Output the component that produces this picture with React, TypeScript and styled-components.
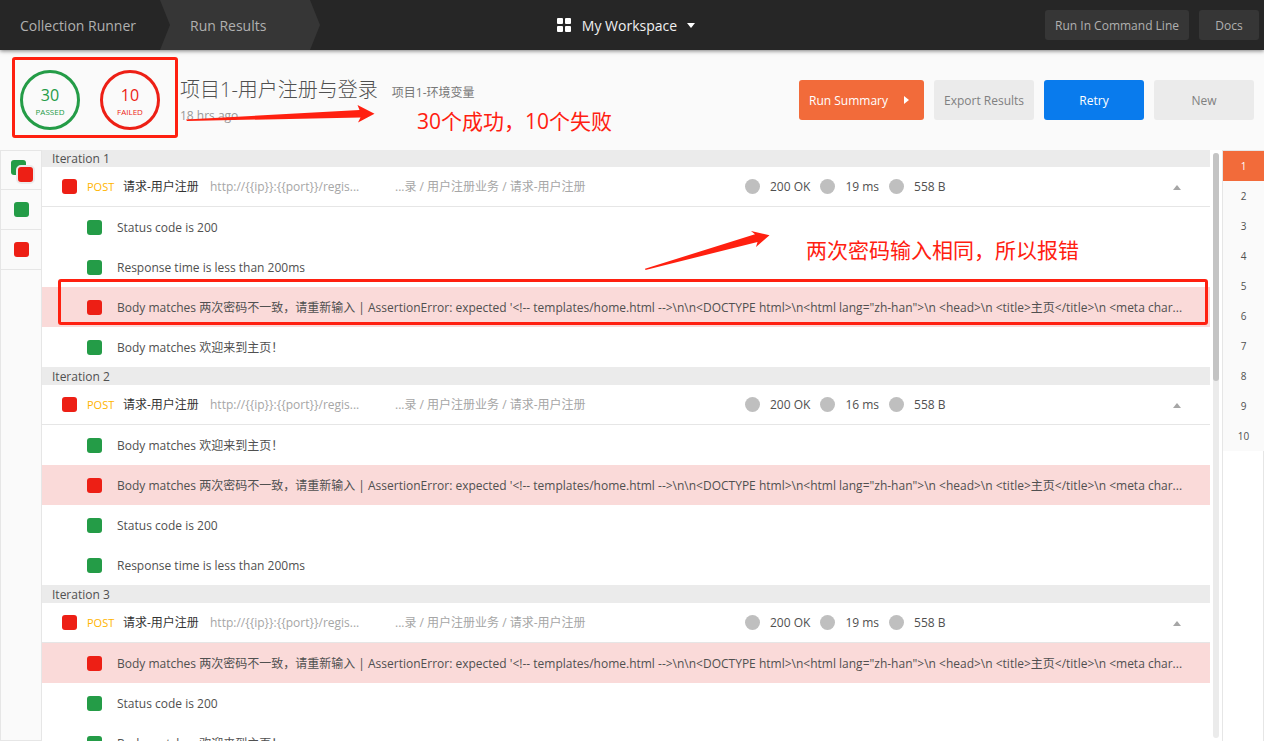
import React from 'react';
import styled, { createGlobalStyle, css } from 'styled-components';

const GREEN = '#249c47';
const RED = '#ed1f15';
const ORANGE = '#f26b3a';
const MARK = '#ff2010';

const GlobalStyle = createGlobalStyle`
  * { box-sizing: border-box; }
  body {
    margin: 0;
    overflow: hidden;
    background: #fff;
    color: #505050;
    font: 12px/18px "Open Sans", "Noto Sans CJK SC", sans-serif;
  }
  button {
    border: 0;
    padding: 0;
    background: none;
    color: inherit;
    font: inherit;
    cursor: pointer;
  }
  svg {
    display: block;
    flex: none;
  }
`;

const Page = styled.div`
  position: relative;
  display: flex;
  flex-direction: column;
  height: 100vh;
  overflow: hidden;
`;

const TopBar = styled.header`
  position: relative;
  z-index: 1;
  flex: none;
  display: grid;
  grid-template-columns: 1fr auto 1fr;
  height: 50px;
  background: #262626;
  box-shadow: 0 1px 4px rgba(0, 0, 0, 0.5);
`;

const Crumbs = styled.nav`
  display: flex;
`;

const Crumb = styled.button<{ $active?: boolean }>`
  width: 160px;
  padding: 2px 20px 0;
  text-align: left;
  font-size: 14px;
  color: #b0b0b0;
  ${(p) =>
    p.$active &&
    css`
      padding: 2px 30px 0;
      background: #363636;
      clip-path: polygon(0 0, 150px 0, 100% 50%, 150px 100%, 0 100%, 10px 50%);
    `}
`;

const Workspace = styled.button`
  display: flex;
  align-items: center;
  gap: 10px;
  padding-right: 12px;
  color: #f0f0f0;
  font-size: 14px;
  font-weight: 500;
`;

const WorkspaceName = styled.span`
  padding-top: 2px;
`;

const TopActions = styled.div`
  display: flex;
  justify-content: flex-end;
  align-items: center;
  gap: 10px;
  padding-right: 5px;
`;

const TopButton = styled.button`
  height: 30px;
  min-width: 60px;
  padding: 2px 10px 0;
  border-radius: 3px;
  background: #363636;
  color: #b0b0b0;
`;

const Summary = styled.section`
  flex: none;
  display: flex;
  align-items: center;
  gap: 20px;
  height: 100px;
  padding: 0 10px 0 20px;
  background: #fafafa;
`;

const Counter = styled.div<{ $color: string }>`
  flex: none;
  display: flex;
  flex-direction: column;
  align-items: center;
  width: 60px;
  height: 60px;
  padding-top: 12px;
  border: 3px solid ${(p) => p.$color};
  border-radius: 50%;
  color: ${(p) => p.$color};
  font-size: 8px;
  line-height: 14px;
`;

const Count = styled.strong`
  font-size: 16px;
  line-height: 20px;
  font-weight: 400;
`;

const RunInfo = styled.div`
  flex: 1;
  min-width: 0;
  color: #999;
  white-space: nowrap;
`;

const TitleLine = styled.div`
  display: flex;
  align-items: baseline;
  gap: 14px;
  line-height: 28px;
  color: #777;
`;

const Title = styled.h1`
  margin: 0;
  font-size: 20px;
  font-weight: 300;
  color: #505050;
`;

const Actions = styled.div`
  display: flex;
  gap: 10px;
`;

const Action = styled.button<{ $kind?: 'primary' | 'summary' }>`
  display: flex;
  align-items: center;
  justify-content: center;
  width: 100px;
  height: 40px;
  padding-top: 2px;
  border-radius: 3px;
  background: #ebebeb;
  color: #808080;
  white-space: nowrap;
  ${(p) =>
    p.$kind &&
    css`
      background: ${p.$kind === 'primary' ? '#097bed' : ORANGE};
      color: #fff;
      font-weight: 500;
    `}
  ${(p) =>
    p.$kind === 'summary' &&
    css`
      width: 125px;
      padding: 0 15px 0 10px;
      justify-content: space-between;
    `}
`;

const ActionLabel = styled.span`
  padding-top: 2px;
`;

const Body = styled.main`
  flex: 1;
  min-height: 0;
  display: flex;
`;

const FilterRail = styled.aside`
  flex: none;
  width: 42px;
  border: 1px solid #e6e6e6;
  background: #fafafa;
`;

const Filter = styled.button<{ $short?: boolean }>`
  display: flex;
  align-items: center;
  justify-content: center;
  width: 100%;
  height: ${(p) => (p.$short ? 39 : 40)}px;
  border-bottom: 1px solid #e6e6e6;
`;

const Square = styled.span<{ $color: string }>`
  flex: none;
  width: 15px;
  height: 15px;
  border-radius: 3px;
  background: ${(p) => p.$color};
`;

const Stack = styled.span`
  display: grid;
  padding: 3px 0 0 4px;
  ${Square} { grid-area: 1 / 1; }
  ${Square}:last-child {
    width: 19px;
    height: 19px;
    margin: 5px 0 0 5px;
    border: 2px solid #ebebeb;
    border-radius: 5px;
  }
`;

const Results = styled.div`
  flex: 1;
  min-width: 0;
  overflow: hidden;
`;

const IterationTitle = styled.h2<{ $first: boolean }>`
  margin: 0;
  padding-left: 10px;
  height: ${(p) => (p.$first ? 17 : 18)}px;
  background: #ebebeb;
  font-size: 12px;
  line-height: ${(p) => (p.$first ? 18 : 20)}px;
  font-weight: 400;
`;

const RequestRow = styled.div`
  display: flex;
  align-items: center;
  height: 40px;
  padding: 0 29px 0 20px;
  border-bottom: 1px solid #e6e6e6;
  white-space: nowrap;
  color: #a6a6a6;
`;

const Method = styled.span`
  width: 46px;
  padding-left: 10px;
  font-size: 11px;
  color: #ffb400;
`;

const RequestName = styled.span`
  width: 87px;
  color: #333;
`;

const Url = styled.span`
  width: 185px;
`;

const Path = styled.span`
  width: 350px;
`;

const Stats = styled.span`
  flex: 1;
  display: flex;
  align-items: center;
  gap: 10px;
  color: #505050;
`;

const Dot = styled.i`
  width: 15px;
  height: 15px;
  border-radius: 50%;
  background: #bfbfbf;
`;

const Collapse = styled.button`
  padding-top: 2px;
`;

const TestRow = styled.div<{ $failed: boolean }>`
  position: relative;
  display: flex;
  align-items: center;
  gap: 15px;
  height: 40px;
  padding: 0 20px 0 45px;
  background: ${(p) => (p.$failed ? '#fadad9' : '#fff')};
  white-space: nowrap;
`;

const TestText = styled.span`
  padding-top: 2px;
`;

const ScrollTrack = styled.div`
  flex: none;
  width: 6px;
  margin: 3px;
  border-radius: 3px;
  background: #ebebeb;
`;

const ScrollThumb = styled.div`
  height: 39%;
  border-radius: 3px;
  background: #c4c4c4;
`;

const PageRail = styled.nav`
  flex: none;
  width: 42px;
  border: 1px solid #e6e6e6;
  border-bottom: 0;
`;

const PageButton = styled.button<{ $active: boolean }>`
  display: block;
  width: 41px;
  height: 30px;
  background: ${(p) => (p.$active ? ORANGE : '#fafafa')};
  color: ${(p) => (p.$active ? '#fff' : '#505050')};
  font-size: 10px;
`;

/* Red review marks lying over the page */
const Frame = styled.div`
  position: absolute;
  border: 3px solid ${MARK};
  border-radius: 3px;
  pointer-events: none;
`;

const CounterFrame = styled(Frame)`
  z-index: 2;
  left: 12px;
  top: 57px;
  width: 166px;
  height: 81px;
`;

const RowFrame = styled(Frame)`
  z-index: 2;
  left: 16px;
  right: 2px;
  top: -8px;
  height: 46px;
`;

const Note = styled.p<{ $x: number; $y: number }>`
  position: absolute;
  z-index: 2;
  left: ${(p) => p.$x}px;
  top: ${(p) => p.$y}px;
  margin: 0;
  color: ${MARK};
  font-size: 21px;
  line-height: 30px;
  white-space: nowrap;
`;

const Arrows = styled.svg`
  position: absolute;
  z-index: 2;
  left: 0;
  top: 0;
  pointer-events: none;
`;

type Test = { text: string; failed?: boolean; framed?: boolean };

const status: Test = { text: 'Status code is 200' };
const time: Test = { text: 'Response time is less than 200ms' };
const welcome: Test = { text: 'Body matches 欢迎来到主页！' };
const mismatch: Test = {
  failed: true,
  text: 'Body matches 两次密码不一致，请重新输入 | AssertionError: expected \'<!-- templates/home.html -->\\n\\n<DOCTYPE html>\\n<html lang="zh-han">\\n <head>\\n <title>主页</title>\\n <meta char...',
};

const iterations: { ms: number; tests: Test[] }[] = [
  { ms: 19, tests: [status, time, { ...mismatch, framed: true }, welcome] },
  { ms: 16, tests: [welcome, mismatch, status, time] },
  { ms: 19, tests: [mismatch, status, welcome, time] },
];

const GridIcon = () => (
  <svg width="15" height="14" viewBox="0 0 15 14" fill="#fff" aria-hidden="true">
    <rect x="0" y="0" width="6" height="6" rx="1" />
    <rect x="8" y="0" width="6" height="6" rx="1" />
    <rect x="0" y="8" width="6" height="6" rx="1" />
    <rect x="8" y="8" width="6" height="6" rx="1" />
  </svg>
);

export default function App() {
  return (
    <Page>
      <GlobalStyle />
      <TopBar>
        <Crumbs>
          <Crumb>Collection Runner</Crumb>
          <Crumb $active>Run Results</Crumb>
        </Crumbs>
        <Workspace>
          <GridIcon />
          <WorkspaceName>My Workspace</WorkspaceName>
          <svg width="8" height="5" viewBox="0 0 8 5" fill="#fff" aria-hidden="true">
            <path d="M0 0H8L4 5Z" />
          </svg>
        </Workspace>
        <TopActions>
          <TopButton>Run In Command Line</TopButton>
          <TopButton>Docs</TopButton>
        </TopActions>
      </TopBar>

      <Summary>
        <Counter $color={GREEN}>
          <Count>30</Count>PASSED
        </Counter>
        <Counter $color={RED}>
          <Count>10</Count>FAILED
        </Counter>
        <RunInfo>
          <TitleLine>
            <Title>项目1-用户注册与登录</Title>
            <span>项目1-环境变量</span>
          </TitleLine>
          18 hrs ago
        </RunInfo>
        <Actions>
          <Action $kind="summary">
            <ActionLabel>Run Summary</ActionLabel>
            <svg width="5" height="8" viewBox="0 0 5 8" fill="#fff" aria-hidden="true">
              <path d="M0 0L5 4L0 8Z" />
            </svg>
          </Action>
          <Action>Export Results</Action>
          <Action $kind="primary">Retry</Action>
          <Action>New</Action>
        </Actions>
      </Summary>

      <Body>
        <FilterRail>
          <Filter $short aria-label="All tests">
            <Stack>
              <Square $color={GREEN} />
              <Square $color={RED} />
            </Stack>
          </Filter>
          <Filter aria-label="Passed tests">
            <Square $color={GREEN} />
          </Filter>
          <Filter aria-label="Failed tests">
            <Square $color={RED} />
          </Filter>
        </FilterRail>

        <Results>
          {iterations.map((it, i) => (
            <section key={i}>
              <IterationTitle $first={i === 0}>Iteration {i + 1}</IterationTitle>
              <RequestRow>
                <Square $color={RED} />
                <Method>POST</Method>
                <RequestName>请求-用户注册</RequestName>
                <Url>{'http://{{ip}}:{{port}}/regis...'}</Url>
                <Path>...录 / 用户注册业务 / 请求-用户注册</Path>
                <Stats>
                  <Dot />200 OK
                  <Dot />{it.ms} ms
                  <Dot />558 B
                </Stats>
                <Collapse aria-label="Collapse">
                  <svg width="8" height="5" viewBox="0 0 8 5" fill="#a6a6a6">
                    <path d="M0 5L4 0L8 5Z" />
                  </svg>
                </Collapse>
              </RequestRow>
              {it.tests.map((t, j) => (
                <TestRow key={j} $failed={!!t.failed}>
                  <Square $color={t.failed ? RED : GREEN} />
                  <TestText>{t.text}</TestText>
                  {t.framed && <RowFrame />}
                </TestRow>
              ))}
            </section>
          ))}
        </Results>

        <ScrollTrack>
          <ScrollThumb />
        </ScrollTrack>

        <PageRail>
          {Array.from({ length: 10 }, (_, i) => (
            <PageButton key={i} $active={i === 0}>
              {i + 1}
            </PageButton>
          ))}
        </PageRail>
      </Body>

      <CounterFrame />
      <Note $x={417} $y={106}>30个成功，10个失败</Note>
      <Note $x={806} $y={235}>两次密码输入相同，所以报错</Note>
      <Arrows width="780" height="280" viewBox="0 0 780 280" fill={MARK} aria-hidden="true">
        <path d="M186 119.5L359.5 110L357.5 105L374.5 113.7L358 122.5L360.5 117.5L187 121Z" />
        <path d="M645 268.7L755 234.3L751 231L769.5 235.3L756 247L757.5 242L645.5 270Z" />
      </Arrows>
    </Page>
  );
}
